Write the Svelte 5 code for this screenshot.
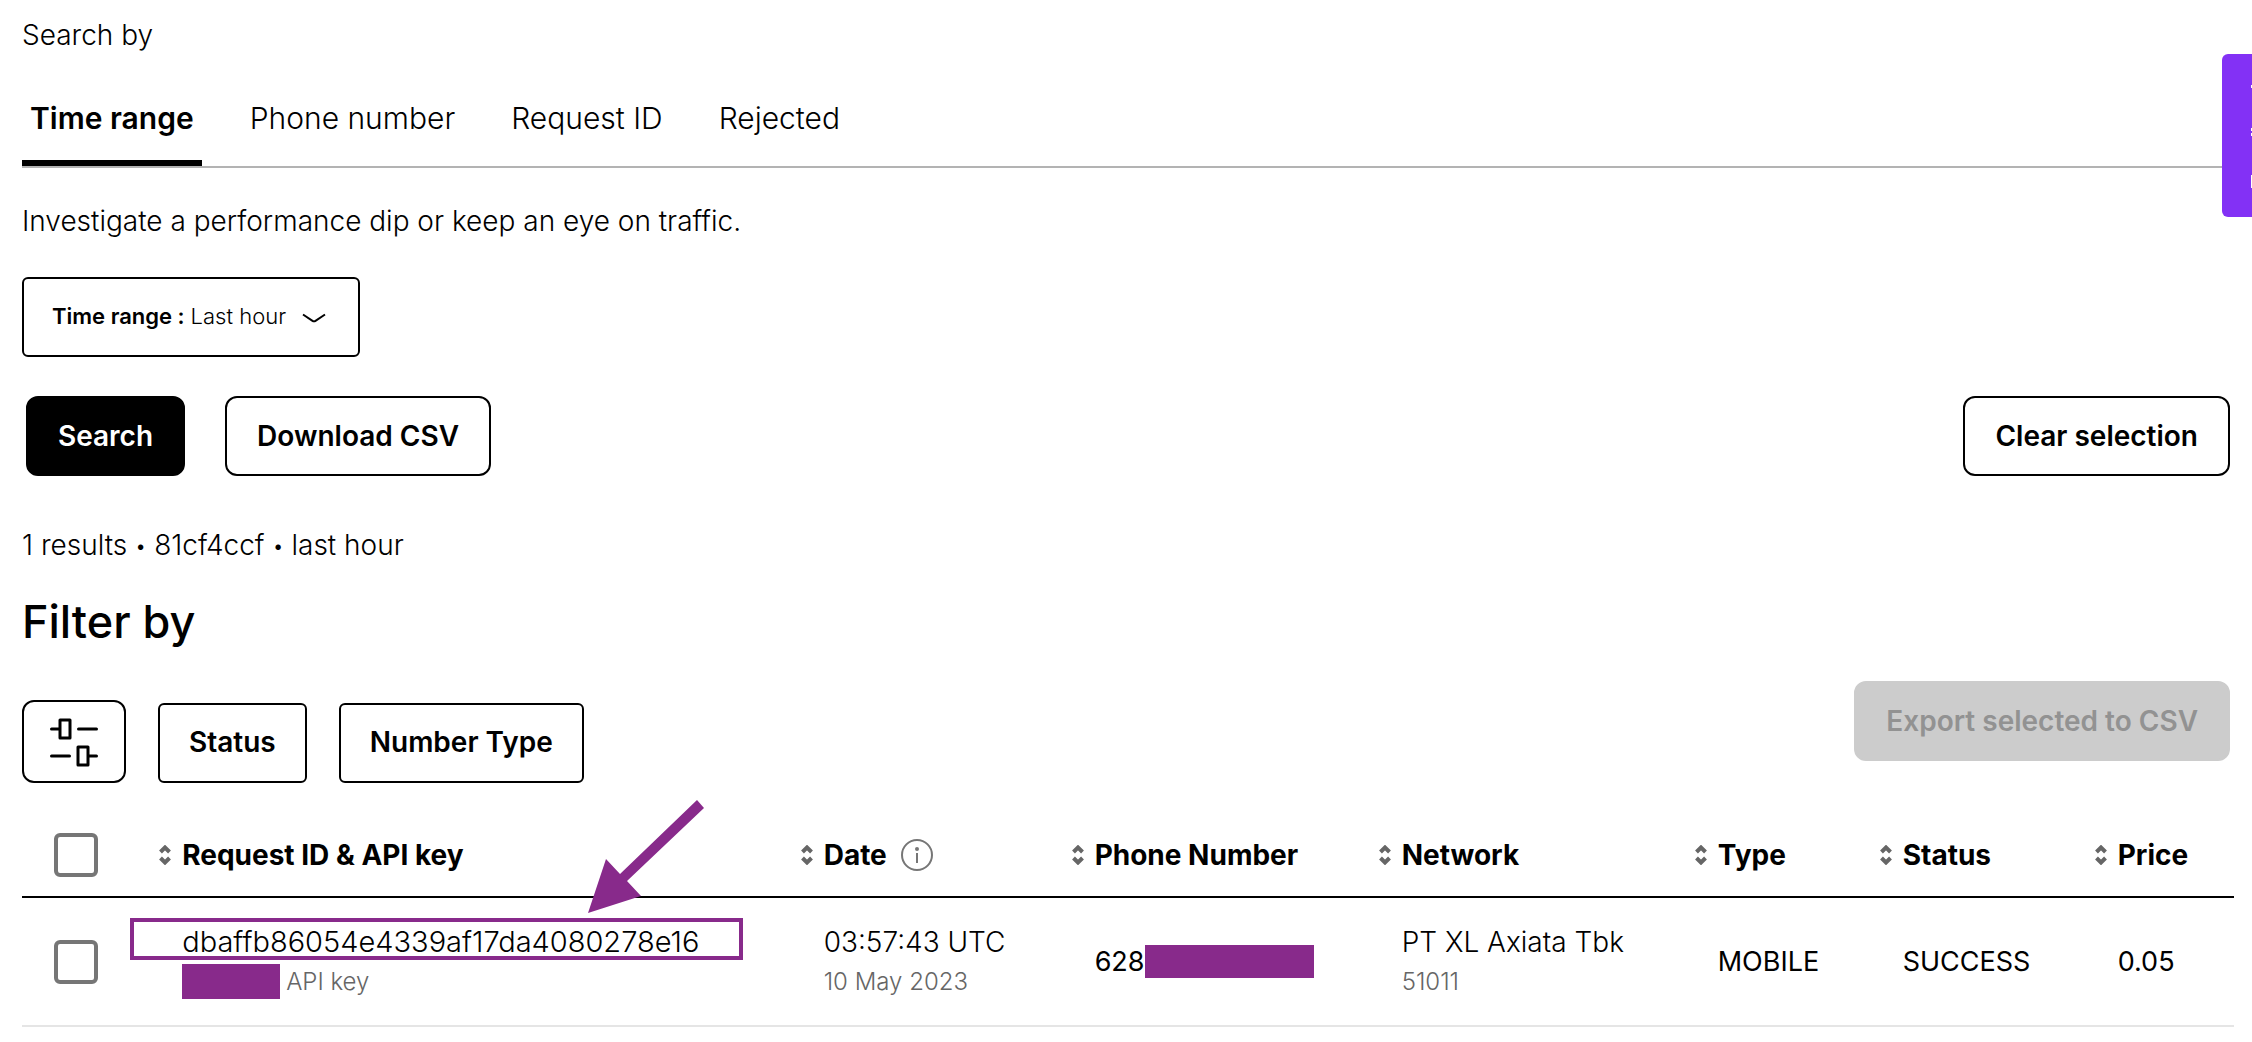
<script>
	const tabs = ['Time range', 'Phone number', 'Request ID', 'Rejected'];
	let activeTab = $state('Time range');
	let range = $state('Last hour');

	const columns = [
		{ label: 'Request ID & API key', width: 29 },
		{ label: 'Date', width: 12.25, info: true },
		{ label: 'Phone Number', width: 13.88 },
		{ label: 'Network', width: 14.29 },
		{ label: 'Type', width: 8.36 },
		{ label: 'Status', width: 9.72 },
		{ label: 'Price', width: 6.3 }
	];

	const rows = [
		{
			id: 'dbaffb86054e4339af17da4080278e16',
			time: '03:57:43 UTC',
			date: '10 May 2023',
			phone: '628',
			network: 'PT XL Axiata Tbk',
			code: '51011',
			type: 'MOBILE',
			status: 'SUCCESS',
			price: '0.05'
		}
	];

	let selected = $state([false]);
	const allSelected = $derived(selected.every(Boolean));

	function toggleAll(e) {
		selected = rows.map(() => e.target.checked);
	}
</script>

<main>
	<p class="search-by">Search by</p>

	<div class="tabs" role="tablist">
		{#each tabs as tab}
			<button
				class="tab"
				class:active={tab === activeTab}
				role="tab"
				aria-selected={tab === activeTab}
				onclick={() => (activeTab = tab)}>{tab}</button
			>
		{/each}
	</div>

	<p class="hint">Investigate a performance dip or keep an eye on traffic.</p>

	<label class="range">
		<b>Time range :</b>
		<select bind:value={range}>
			<option>Last hour</option>
		</select>
		<svg width="26" height="10" viewBox="0 0 26 10" aria-hidden="true">
			<path d="M2 1.5 11.500 7.800Q13 8.700 14.500 7.800L24 1.500" />
		</svg>
	</label>

	<div class="actions">
		<button class="btn primary">Search</button>
		<button class="btn">Download CSV</button>
		<button class="btn clear">Clear selection</button>
	</div>

	<p class="summary">1 results <span>•</span> 81cf4ccf <span>•</span> last hour</p>

	<h2>Filter by</h2>

	<div class="filters">
		<button class="filter-icon" aria-label="Filters">
			<svg width="48" height="50" viewBox="0 0 48 50" aria-hidden="true">
				<path d="M1.500 12H9M28.500 12H46.500M1.500 39H19.500M39 39H46.500" />
				<path d="M10 3H20V21H10ZM28 30H38V48H28Z" />
			</svg>
		</button>
		<button class="btn filter">Status</button>
		<button class="btn filter">Number Type</button>
		<button class="btn export" disabled>Export selected to CSV</button>
	</div>

	<table>
		<colgroup>
			<col />
			{#each columns as col}
				<col style="width: {col.width}%" />
			{/each}
		</colgroup>
		<thead>
			<tr>
				<th class="check">
					<input type="checkbox" aria-label="Select all" checked={allSelected} onchange={toggleAll} />
				</th>
				{#each columns as col}
					<th>
						<div class="head">
							<svg class="sort" width="12" height="20" viewBox="0 0 12 20" aria-hidden="true">
								<path d="M1.500 7 6 2.500 10.500 7M1.500 13 6 17.500 10.500 13" />
							</svg>
							<span>{col.label}</span>
							{#if col.info}
								<svg class="info" width="32" height="32" viewBox="0 0 32 32" aria-hidden="true">
									<circle cx="16" cy="16" r="15" />
									<path d="M16 14V24" />
									<circle class="dot" cx="16" cy="10" r="2" />
								</svg>
							{/if}
						</div>
					</th>
				{/each}
			</tr>
		</thead>
		<tbody>
			{#each rows as row, i}
				<tr>
					<td class="check">
						<input type="checkbox" aria-label="Select {row.id}" bind:checked={selected[i]} />
					</td>
					<td>
						<div class="marked">
							{row.id}
							<svg class="arrow" width="116" height="114" viewBox="0 0 116 114" aria-hidden="true">
								<path d="M109 0 116 8 39 81 53 96 0 113 18 59 32 74Z" />
							</svg>
						</div>
						<div class="sub"><span class="redacted key"></span>API key</div>
					</td>
					<td>
						<div>{row.time}</div>
						<div class="sub">{row.date}</div>
					</td>
					<td>
						<div class="phone">{row.phone}<span class="redacted number"></span></div>
					</td>
					<td>
						<div>{row.network}</div>
						<div class="sub">{row.code}</div>
					</td>
					<td class="plain">{row.type}</td>
					<td class="plain">{row.status}</td>
					<td class="plain">{row.price}</td>
				</tr>
			{/each}
		</tbody>
	</table>

	<button class="feedback" aria-label="Feedback">
		<svg width="2" height="104" viewBox="0 0 2 104" aria-hidden="true">
			<path d="M1 1h1v3H1zM1 44h1v3H1zM1 49h1v3H1zM1 91h1v13H1z" />
		</svg>
	</button>
</main>

<style>
	:global(body) {
		margin: 0;
		background: #fff;
	}

	main {
		position: relative;
		box-sizing: border-box;
		padding: 15px 18px 0 22px;
		overflow: hidden;
		font-family: Inter, 'Liberation Sans', sans-serif;
		font-size: 28px;
		font-weight: 300;
		line-height: 40px;
		color: #000;
	}

	p,
	h2 {
		margin: 0;
	}

	button,
	select {
		font: inherit;
		color: inherit;
		background: none;
		border: none;
		padding: 0;
		cursor: pointer;
	}

	.tabs {
		display: flex;
		gap: 40px;
		margin-top: 43px;
		border-bottom: 2px solid #b3b3b3;
	}

	.tab {
		padding: 0 8px 22px;
		border-bottom: 6px solid transparent;
		font-size: 30px;
	}
	.tab.active {
		border-color: #000;
		font-weight: 600;
	}

	.hint {
		margin-top: 33px;
	}

	.range {
		display: flex;
		align-items: center;
		box-sizing: border-box;
		width: fit-content;
		height: 80px;
		margin-top: 36px;
		padding: 0 31px 2px 28px;
		border: 2px solid #000;
		border-radius: 6px;
		font-size: 22px;
	}
	.range b {
		margin-right: 6px;
		font-weight: 600;
	}
	.range select {
		appearance: none;
		margin-right: 14px;
		outline: none;
	}
	.range svg {
		margin-top: 4px;
		fill: none;
		stroke: #000;
		stroke-width: 2;
	}

	.actions {
		display: flex;
		gap: 40px;
		margin-top: 39px;
		padding: 0 4px;
	}

	.btn {
		box-sizing: border-box;
		height: 80px;
		padding: 0 30px;
		border: 2px solid #000;
		border-radius: 12px;
		font-weight: 600;
		white-space: nowrap;
	}
	.primary {
		background: #000;
		color: #fff;
	}
	.clear {
		margin-left: auto;
	}

	.summary {
		margin-top: 49px;
	}
	.summary span {
		font-size: 20px;
		line-height: 20px;
		vertical-align: 2px;
	}

	h2 {
		margin-top: 29px;
		font-size: 45px;
		font-weight: 500;
		line-height: 56px;
	}

	.filters {
		display: flex;
		align-items: flex-end;
		gap: 32px;
		height: 102px;
		margin-top: 31px;
		padding-right: 4px;
	}

	.filter-icon {
		display: flex;
		align-items: center;
		justify-content: center;
		box-sizing: border-box;
		width: 104px;
		height: 83px;
		border: 2px solid #000;
		border-radius: 12px;
	}
	.filter-icon svg {
		fill: none;
		stroke: #000;
		stroke-width: 3;
		stroke-linecap: round;
		stroke-linejoin: round;
	}

	.filter {
		padding: 0 29px 2px;
		border-radius: 6px;
	}

	.export {
		align-self: flex-start;
		margin-left: auto;
		border-color: #ccc;
		background: #ccc;
		color: #929292;
		cursor: default;
	}

	table {
		width: 100%;
		margin-top: 30px;
		table-layout: fixed;
		border-collapse: collapse;
	}

	th {
		height: 83px;
		padding: 0;
		border-bottom: 2px solid #000;
		font-weight: 700;
		text-align: left;
	}

	td {
		height: 127px;
		padding: 0 0 0 23px;
		border-bottom: 2px solid #e5e5e5;
		white-space: nowrap;
	}

	.check {
		padding: 0 0 0 32px;
	}

	input {
		display: block;
		appearance: none;
		box-sizing: border-box;
		width: 44px;
		height: 44px;
		margin: 0;
		border: 4px solid #767676;
		border-radius: 6px;
		background: #fff;
	}
	input:checked {
		background: #767676;
	}

	.head {
		display: flex;
		align-items: center;
		white-space: nowrap;
	}

	.sort {
		margin-right: 11px;
		fill: none;
		stroke: #666;
		stroke-width: 4;
	}

	.info {
		margin-left: 14px;
		fill: none;
		stroke: #767676;
		stroke-width: 2;
	}
	.info .dot {
		fill: #767676;
		stroke: none;
	}

	.sub {
		display: flex;
		align-items: center;
		font-size: 24px;
		color: #666;
	}

	.plain,
	.phone {
		font-size: 27px;
		font-weight: 400;
	}

	.phone {
		display: flex;
		align-items: center;
	}

	.redacted {
		background: #882a8b;
	}
	.key {
		width: 98px;
		height: 35px;
		margin-right: 6px;
	}
	.number {
		width: 169px;
		height: 33px;
	}

	/* annotation frame and arrow around the request id */
	.marked {
		position: relative;
		font-size: 29px;
	}
	.marked::after {
		content: '';
		position: absolute;
		top: -4px;
		left: -52px;
		box-sizing: border-box;
		width: 613px;
		height: 42px;
		border: 4px solid #882a8b;
	}
	.arrow {
		position: absolute;
		left: 406px;
		bottom: 48px;
		fill: #882a8b;
	}

	.feedback {
		position: absolute;
		top: 54px;
		right: 0;
		display: flex;
		align-items: center;
		justify-content: flex-end;
		width: 30px;
		height: 163px;
		border-radius: 6px 0 0 6px;
		background: #8331f5;
	}
	.feedback svg {
		fill: #fff;
	}
</style>
